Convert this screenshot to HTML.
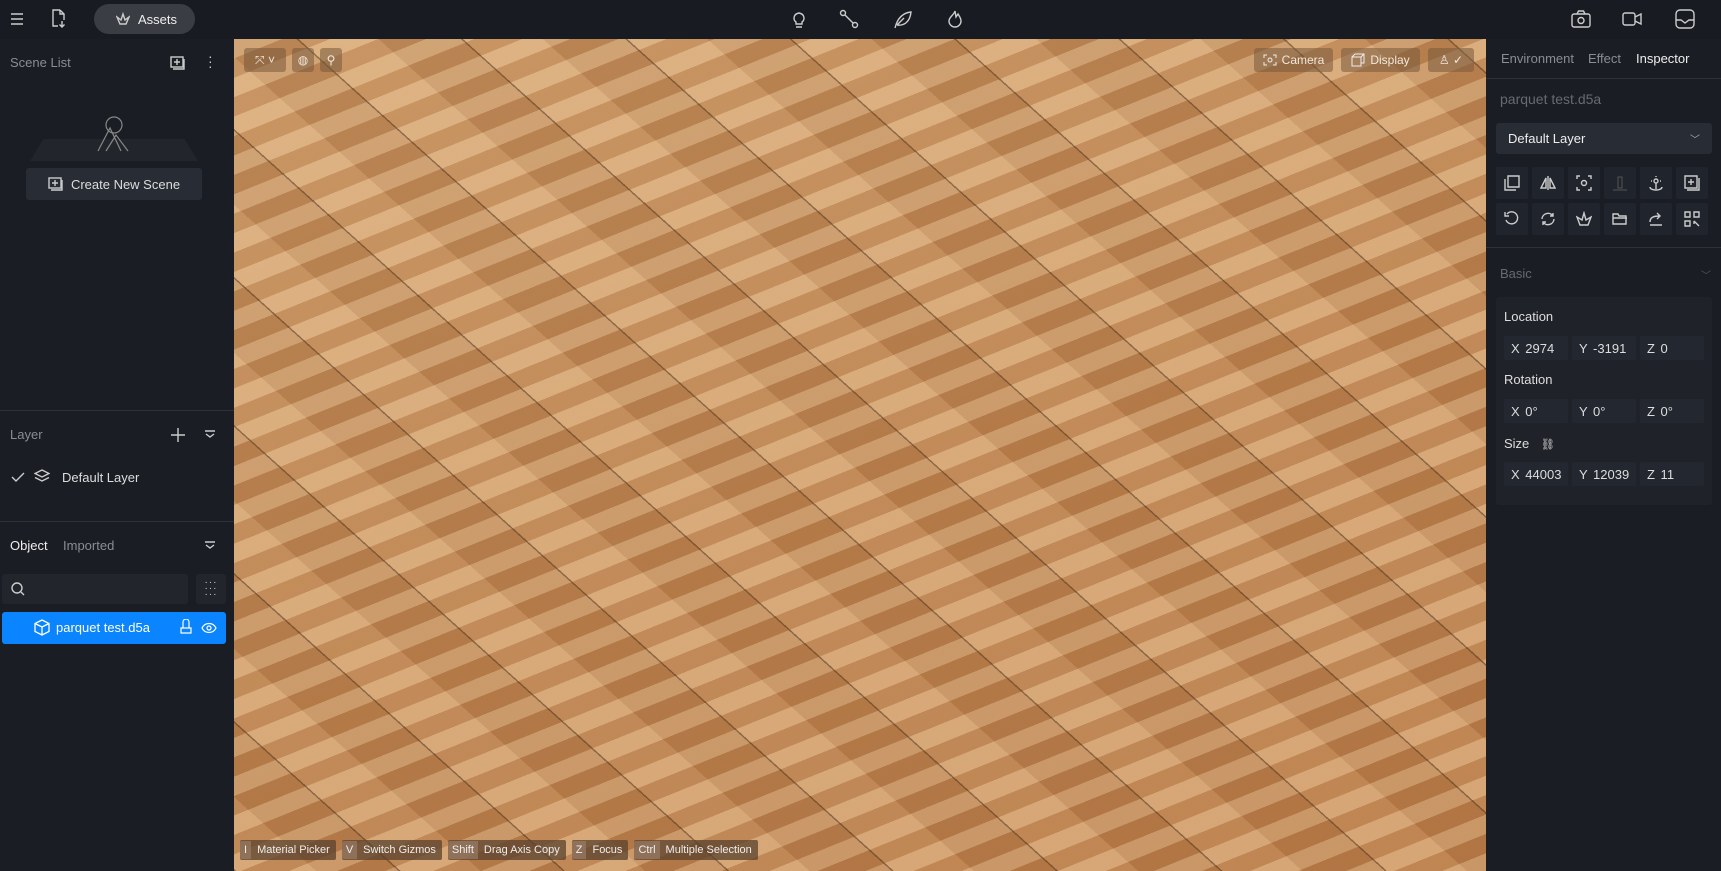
<!DOCTYPE html>
<html><head><meta charset="utf-8"><style>
*{box-sizing:border-box;margin:0;padding:0}
body{width:1721px;height:871px;background:#181b22;font-family:"Liberation Sans",sans-serif;color:#ddd;position:relative;overflow:hidden;font-size:13px}
.a{position:absolute}
.top{left:0;top:0;width:1721px;height:39px;background:#181b22}
.left{left:0;top:39px;width:234px;height:832px;background:#1a1d24}
.right{left:1486px;top:39px;width:235px;height:832px;background:#1a1d24}
.vp{left:234px;top:39px;width:1252px;height:832px;overflow:hidden;background:#c8925e}
.wood{position:absolute;inset:0;background:
repeating-linear-gradient(42deg,rgba(50,25,5,.45) 0 1.5px,rgba(0,0,0,0) 1.5px 110px),
repeating-linear-gradient(158deg,rgba(255,235,200,.22) 0 18px,rgba(120,60,20,.14) 18px 36px),
repeating-linear-gradient(42deg,rgba(255,225,180,.12) 0 55px,rgba(100,50,15,.1) 55px 110px),
linear-gradient(160deg,#d09c68,#c68c57 60%,#c48752)}
.btn{background:rgba(120,90,60,.55);border-radius:3px;color:#f2e8dc;font-size:12px;display:flex;align-items:center;justify-content:center;gap:5px}
.hint{background:rgba(90,65,45,.75);border-radius:2px;color:#eee;font-size:11px;height:20px;display:flex;align-items:center;padding:0 6px 0 0}
.hint b{font-weight:normal;background:rgba(160,130,110,.6);padding:3px 4px;margin-right:6px;border-radius:2px 0 0 2px}
.ic{stroke:#ccc;fill:none;stroke-width:1.4}
.inp{background:#23272f;border-radius:2px;height:24px;width:64px;font-size:13px;color:#ddd;padding:5px 7px;word-spacing:2px;white-space:nowrap;overflow:hidden}
.cell{width:32px;height:32px;background:#20242c;border-radius:2px;display:flex;align-items:center;justify-content:center}
.lbl{color:#8a8d94;font-size:13px}
</style></head><body>
<div class="a top">
<svg class="a" style="left:10px;top:12px" width="14" height="14"><path class="ic" d="M1 2H13M1 7H13M1 12H13"/></svg>
<svg class="a" style="left:50px;top:9px" width="18" height="20"><path class="ic" d="M10 1H3V17H8M10 1L14 5V11M10 1V5H14M12 12V18M9.5 15.5L12 18L14.5 15.5"/></svg>
<div class="a" style="left:94px;top:4px;width:101px;height:30px;background:#3a3d44;border-radius:15px;color:#eee;font-size:13px;display:flex;align-items:center;padding-left:22px;gap:8px"><svg width="14" height="14"><path class="ic" d="M1 5L4 12H10L13 5L9 8L7 2L5 8Z"/></svg>Assets</div>
<svg class="a" style="left:790px;top:10px" width="18" height="20"><path class="ic" d="M6 17H12M6 14V12C3 10 3 4 9 3C15 4 15 10 12 12V14Z"/></svg>
<svg class="a" style="left:839px;top:9px" width="20" height="20"><circle class="ic" cx="4" cy="4" r="2.5"/><circle class="ic" cx="16" cy="16" r="2.5"/><path class="ic" d="M6 6L14 14"/></svg>
<svg class="a" style="left:893px;top:10px" width="20" height="20"><path class="ic" d="M2 18C4 10 8 3 18 2C17 12 11 16 4 15M4 15L11 8"/></svg>
<svg class="a" style="left:946px;top:9px" width="18" height="20"><path class="ic" d="M9 2C8 6 3 8 3 12A6 6 0 0 0 15 12C15 9 13 7 12 5L10 8Z"/></svg>
<svg class="a" style="left:1571px;top:10px" width="20" height="18"><rect class="ic" x="1" y="4" width="18" height="13" rx="2"/><path class="ic" d="M6 4L7.5 1H12.5L14 4"/><circle class="ic" cx="10" cy="10.5" r="3"/></svg>
<svg class="a" style="left:1622px;top:11px" width="20" height="16"><rect class="ic" x="1" y="2" width="12" height="12" rx="2"/><path class="ic" d="M13 6L19 3V13L13 10"/></svg>
<svg class="a" style="left:1675px;top:9px" width="20" height="20"><rect class="ic" x="1" y="1" width="18" height="18" rx="4"/><path class="ic" d="M1 11H6L10 14L14 11H19"/></svg>
</div>

<div class="a left">
<div class="a lbl" style="left:10px;top:16px">Scene List</div>
<svg class="a" style="left:170px;top:17px" width="15" height="14"><rect class="ic" x="1" y="1" width="12" height="10"/><path class="ic" d="M3 13H14V3M7 3V9M4 6H10"/></svg>
<div class="a" style="left:208px;top:15px;color:#ccc;font-size:14px;line-height:5px">·<br>·<br>·</div>
<div class="a" style="left:30px;top:100px;width:168px;height:22px;background:#22252c;clip-path:polygon(8% 0,92% 0,100% 100%,0 100%)"></div>
<svg class="a" style="left:96px;top:76px" width="36" height="38"><circle cx="18" cy="10" r="8" stroke="#888" fill="none" stroke-width="1.2"/><path d="M2 36L14 13L25 36M10 36L20 20L32 36" stroke="#888" fill="none" stroke-width="1.2"/></svg>
<div class="a" style="left:26px;top:129px;width:176px;height:32px;background:#282c34;border-radius:3px;display:flex;align-items:center;justify-content:center;gap:8px;color:#ddd;font-size:13px"><svg width="15" height="14"><rect class="ic" x="1" y="1" width="12" height="10"/><path class="ic" d="M3 13H14V3M7 3V9M4 6H10"/></svg>Create New Scene</div>
<div class="a" style="left:0;top:371px;width:234px;height:1px;background:#2e3138"></div>
<div class="a lbl" style="left:10px;top:388px">Layer</div>
<svg class="a" style="left:170px;top:388px" width="16" height="16"><path d="M8 1V15M1 8H15" stroke="#ccc" stroke-width="1.4"/></svg>
<svg class="a" style="left:204px;top:390px" width="12" height="10"><path class="ic" d="M1 2H11M2 5L6 8L10 5"/></svg>
<svg class="a" style="left:11px;top:432px" width="14" height="12"><path class="ic" d="M1 6L5 10L13 2"/></svg>
<svg class="a" style="left:34px;top:430px" width="16" height="14"><path class="ic" d="M8 1L15 4.5L8 8L1 4.5Z M1 8.5L8 12L15 8.5"/></svg>
<div class="a" style="left:62px;top:431px;color:#ddd;font-size:13px">Default Layer</div>
<div class="a" style="left:0;top:482px;width:234px;height:1px;background:#2e3138"></div>
<div class="a" style="left:10px;top:499px;color:#eee;font-size:13px">Object</div>
<div class="a lbl" style="left:63px;top:499px">Imported</div>
<svg class="a" style="left:204px;top:501px" width="12" height="10"><path class="ic" d="M1 2H11M2 5L6 8L10 5"/></svg>
<div class="a" style="left:2px;top:535px;width:186px;height:30px;background:#22252c;border-radius:3px"></div>
<svg class="a" style="left:10px;top:542px" width="16" height="16"><circle class="ic" cx="7" cy="7" r="5"/><path class="ic" d="M11 11L14 14"/></svg>
<div class="a" style="left:196px;top:535px;width:30px;height:30px;background:#22252c;border-radius:3px;color:#ccc;font-size:10px;line-height:6px;text-align:center;padding-top:6px;letter-spacing:1px">···<br>···<br>···</div>
<div class="a" style="left:2px;top:573px;width:224px;height:32px;background:#0a84ff;border-radius:3px"></div>
<svg class="a" style="left:34px;top:580px" width="16" height="17"><path d="M8 1L15 4.5V12.5L8 16L1 12.5V4.5Z M1 4.5L8 8L15 4.5M8 8V16" stroke="#fff" fill="none" stroke-width="1.3"/></svg>
<div class="a" style="left:56px;top:581px;color:#fff;font-size:13px">parquet test.d5a</div>
<svg class="a" style="left:180px;top:580px" width="12" height="16"><path d="M3 9V3A3 3 0 0 1 9 3V9M1 9H11V14H1Z" stroke="#fff" fill="none" stroke-width="1.2"/></svg>
<svg class="a" style="left:201px;top:583px" width="16" height="12"><path d="M1 6C4 0 12 0 15 6C12 12 4 12 1 6Z" stroke="#fff" fill="none" stroke-width="1.2"/><circle cx="8" cy="6" r="2" stroke="#fff" fill="none" stroke-width="1.2"/></svg>
</div>

<div class="a vp"><div class="wood"></div>
<div class="a btn" style="left:10px;top:9px;width:42px;height:24px">⤧ ˅</div>
<div class="a btn" style="left:58px;top:9px;width:22px;height:24px">◍</div>
<div class="a btn" style="left:86px;top:9px;width:22px;height:24px">⚲</div>
<div class="a btn" style="left:1020px;top:9px;width:79px;height:24px"><svg width="14" height="12"><path d="M1 4V1H4M10 1H13V4M13 8V11H10M4 11H1V8" stroke="#eee" fill="none"/><circle cx="7" cy="6" r="2" stroke="#eee" fill="none"/></svg>Camera</div>
<div class="a btn" style="left:1107px;top:9px;width:79px;height:24px"><svg width="14" height="14"><path d="M1 4H10V13H1Z M4 1H13V10H10M1 4L4 1M10 4L13 1" stroke="#eee" fill="none"/></svg>Display</div>
<div class="a btn" style="left:1194px;top:9px;width:46px;height:24px">♙ ✓</div>
<div class="a" style="left:6px;top:801px;display:flex;gap:6px">
<div class="hint"><b>I</b>Material Picker</div><div class="hint"><b>V</b>Switch Gizmos</div><div class="hint"><b>Shift</b>Drag Axis Copy</div><div class="hint"><b>Z</b>Focus</div><div class="hint"><b>Ctrl</b>Multiple Selection</div>
</div>
</div>

<div class="a right">
<div class="a lbl" style="left:15px;top:12px">Environment</div>
<div class="a lbl" style="left:102px;top:12px">Effect</div>
<div class="a" style="left:150px;top:12px;color:#eee;font-size:13px">Inspector</div>
<div class="a" style="left:0;top:39px;width:235px;height:1px;background:#2e3138"></div>
<div class="a" style="left:14px;top:52px;color:#666a72;font-size:14px">parquet test.d5a</div>
<div class="a" style="left:10px;top:84px;width:216px;height:31px;background:#282c34;border-radius:3px;color:#eee;font-size:13px;padding:8px 12px">Default Layer<span style="float:right;color:#aaa;font-size:10px">﹀</span></div>
<div class="a" style="left:10px;top:128px;display:grid;grid-template-columns:repeat(6,32px);gap:4px">
<div class="cell"><svg width="16" height="16"><path class="ic" d="M4 1H15V12H4Z M1 4V15H12"/></svg></div>
<div class="cell"><svg width="16" height="16"><path class="ic" d="M8 1V15M6 3L1 13H6ZM10 3L15 13H10Z"/></svg></div>
<div class="cell"><svg width="16" height="16"><path class="ic" d="M1 4V1H4M12 1H15V4M15 12V15H12M4 15H1V12"/><circle class="ic" cx="8" cy="8" r="2.5"/></svg></div>
<div class="cell"><svg width="16" height="16"><path d="M6 2H10V13H6ZM1 15H15" stroke="#555" fill="none"/></svg></div>
<div class="cell"><svg width="16" height="16"><circle class="ic" cx="8" cy="6" r="2"/><path class="ic" d="M8 1V2M3 6H4M12 6H13M8 8V14M2 12C2 16 14 16 14 12"/></svg></div>
<div class="cell"><svg width="16" height="16"><path class="ic" d="M1 1H13V13H1Z M3 15H15V3M7 4V10M4 7H10"/></svg></div>
<div class="cell"><svg width="16" height="16"><path class="ic" d="M3 3A6 6 0 1 1 2 9M1 1V5H5"/></svg></div>
<div class="cell"><svg width="16" height="16"><path class="ic" d="M2 8A6 6 0 0 1 13 5M14 8A6 6 0 0 1 3 11M13 2V5H10M3 14V11H6"/></svg></div>
<div class="cell"><svg width="16" height="16"><path class="ic" d="M1 6L4 14H12L15 6L10 9L8 2L6 9Z"/></svg></div>
<div class="cell"><svg width="16" height="16"><path class="ic" d="M1 3H6L7 5H14V13H1Z M1 7H15"/></svg></div>
<div class="cell"><svg width="16" height="16"><path class="ic" d="M2 14H14M2 11C2 6 6 5 12 5M9 2L12 5L9 8"/></svg></div>
<div class="cell"><svg width="16" height="16"><path class="ic" d="M1 1H6V6H1ZM10 1H15V6H10ZM1 10H6V15H1ZM10 10L15 15M10 10V13"/></svg></div>
</div>
<div class="a" style="left:0;top:208px;width:235px;height:1px;background:#2e3138"></div>
<div class="a" style="left:14px;top:227px;color:#666a72;font-size:13px">Basic</div>
<div class="a" style="left:215px;top:228px;color:#555;font-size:10px">﹀</div>
<div class="a" style="left:10px;top:258px;width:216px;height:208px;background:#1f2229;border-radius:3px">
<div class="a" style="left:8px;top:12px;color:#ddd">Location</div>
<div class="a inp" style="left:8px;top:39px">X 2974</div><div class="a inp" style="left:76px;top:39px">Y -3191</div><div class="a inp" style="left:144px;top:39px">Z 0</div>
<div class="a" style="left:8px;top:75px;color:#ddd">Rotation</div>
<div class="a inp" style="left:8px;top:102px">X 0°</div><div class="a inp" style="left:76px;top:102px">Y 0°</div><div class="a inp" style="left:144px;top:102px">Z 0°</div>
<div class="a" style="left:8px;top:139px;color:#ddd">Size <span style="margin-left:8px;font-size:11px">⛓</span></div>
<div class="a inp" style="left:8px;top:165px">X 44003</div><div class="a inp" style="left:76px;top:165px">Y 12039</div><div class="a inp" style="left:144px;top:165px">Z 11</div>
</div>
</div>
</body></html>
